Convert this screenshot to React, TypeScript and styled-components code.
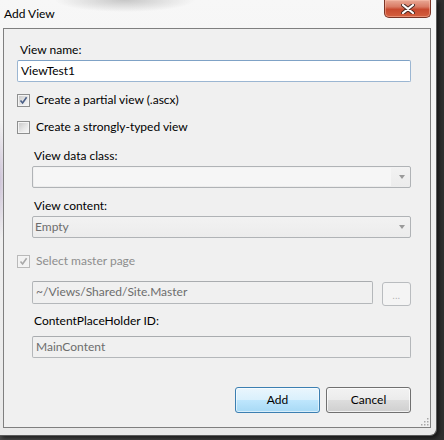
import React, { FC, ReactNode } from 'react';
import styled, { createGlobalStyle, css } from 'styled-components';

const GlobalStyle = createGlobalStyle`
  html, body {
    margin: 0;
    padding: 0;
  }
  body {
    background: #3a3a3a;
    font-family: Lato, 'Open Sans', 'Noto Sans', sans-serif;
    font-size: 12px;
  }
`;

const FIELD_FONT = css`
  font-family: Lato, 'Open Sans', 'Noto Sans', sans-serif;
  font-size: 12px;
  line-height: 16px;
`;

const App: FC = () => (
  <>
    <GlobalStyle />
    <Screen>
      <Window>
        <TitleBar>
          <Title>Add View</Title>
          <CloseButton>
            <svg width="14" height="10" viewBox="0 0 14 10">
              <path d="M2 1 L12 9 M12 1 L2 9" stroke="#4a2a24" strokeWidth="4" strokeLinecap="round" />
              <path d="M2 1 L12 9 M12 1 L2 9" stroke="#ffffff" strokeWidth="2.2" strokeLinecap="round" />
            </svg>
          </CloseButton>
        </TitleBar>
        <Client>
          <Label indent={3}>View name:</Label>
          <TextBox focused>ViewTest1</TextBox>

          <CheckRow top={10}>
            <CheckBox checked />
            <CheckText>Create a partial view (.ascx)</CheckText>
          </CheckRow>
          <CheckRow top={11}>
            <CheckBox />
            <CheckText>Create a strongly-typed view</CheckText>
          </CheckRow>

          <Indented>
            <Label indent={2} top={13}>View data class:</Label>
            <ComboBox>
              <ComboField />
              <Arrow />
            </ComboBox>

            <Label indent={2} top={10}>View content:</Label>
            <ComboBox>
              <ComboText>Empty</ComboText>
              <Arrow />
            </ComboBox>
          </Indented>

          <CheckRow top={15}>
            <CheckBox checked disabled />
            <CheckText disabled>Select master page</CheckText>
          </CheckRow>

          <Indented>
            <PathRow>
              <TextBox disabled grow>~/Views/Shared/Site.Master</TextBox>
              <BrowseButton>...</BrowseButton>
            </PathRow>
            <Label indent={2} top={7}>ContentPlaceHolder ID:</Label>
            <TextBox disabled gap={5}>MainContent</TextBox>
          </Indented>

          <ButtonBar>
            <Button primary>Add</Button>
            <Button>Cancel</Button>
          </ButtonBar>

          <Grip>
            <svg width="9" height="9" viewBox="0 0 9 9">
              {[[7, 1], [7, 4], [4, 4], [7, 7], [4, 7], [1, 7]].map(([x, y]) => (
                <rect key={`${x}-${y}`} x={x} y={y} width="1.5" height="1.5" fill="#a7a7a7" />
              ))}
            </svg>
          </Grip>
        </Client>
      </Window>
    </Screen>
  </>
);

const CheckBox: FC<{ checked?: boolean; disabled?: boolean }> = ({ checked, disabled }) => (
  <Box disabled={disabled}>
    <BoxInner disabled={disabled}>
      {checked && (
        <svg width="9" height="9" viewBox="0 0 9 9">
          <path
            d="M1.5 4.5 L3.6 7 L7.6 1.2"
            fill="none"
            stroke={disabled ? '#a8a8a8' : '#4a5f87'}
            strokeWidth="1.6"
          />
        </svg>
      )}
    </BoxInner>
  </Box>
);

const Label: FC<{ indent?: number; top?: number; children: ReactNode }> = ({ indent = 0, top = 0, children }) => (
  <LabelText indent={indent} top={top}>{children}</LabelText>
);

const Screen = styled.div`
  width: 444px;
  height: 440px;
  overflow: hidden;
  background: linear-gradient(90deg, #4a4a4a 0%, #2f2f2f 100%);
`;

const Window = styled.div`
  box-sizing: border-box;
  width: 437px;
  height: 436px;
  padding: 0 5px 7px 3px;
  display: flex;
  flex-direction: column;
  border-right: 1px solid #5a5a5a;
  border-bottom: 1px solid #5a5a5a;
  border-bottom-right-radius: 7px;
  background:
    radial-gradient(ellipse 70px 12px at 125px 0px, rgba(140, 140, 140, 0.45), rgba(140, 140, 140, 0)),
    radial-gradient(ellipse 8px 60px at 0px 180px, rgba(170, 150, 190, 0.5), rgba(170, 150, 190, 0)),
    linear-gradient(180deg, #f7f7f7 0%, #f0f0f0 50%, #e9e9e9 100%);
  box-shadow: 2px 2px 4px rgba(0, 0, 0, 0.6);
`;

const TitleBar = styled.div`
  height: 28px;
  display: flex;
  justify-content: space-between;
  align-items: flex-start;
`;

const Title = styled.div`
  padding: 6px 0 0 1px;
  color: #000;
  font-size: 12px;
  line-height: 16px;
`;

const CloseButton = styled.div`
  box-sizing: border-box;
  width: 47px;
  height: 18px;
  display: flex;
  align-items: center;
  justify-content: center;
  border: 1px solid #7a3426;
  border-top: none;
  border-radius: 0 0 5px 5px;
  background: linear-gradient(180deg, #e9a996 0%, #d97b64 40%, #c84a2f 55%, #d4603f 100%);
  box-shadow: inset 0 0 0 1px rgba(255, 200, 180, 0.45);
`;

const Client = styled.div`
  position: relative;
  flex: 1;
  display: flex;
  flex-direction: column;
  padding: 13px 19px 0 13px;
  border: 1px solid #7f7f7f;
  background: #f0f0f0;
`;

const LabelText = styled.div<{ indent: number; top: number }>`
  ${FIELD_FONT};
  color: #000;
  padding-left: ${(p) => p.indent}px;
  margin-top: ${(p) => p.top}px;
  margin-bottom: 2px;
`;

const TextBox = styled.div<{ focused?: boolean; disabled?: boolean; grow?: boolean; gap?: number }>`
  ${FIELD_FONT};
  box-sizing: border-box;
  height: 22px;
  padding: 2px 3px;
  margin-top: ${(p) => p.gap ?? 0}px;
  flex: ${(p) => (p.grow ? 1 : 'none')};
  color: ${(p) => (p.disabled ? '#6d6d6d' : '#000')};
  background: ${(p) => (p.disabled ? '#f0f0f0' : '#fff')};
  border: 1px solid ${(p) => (p.disabled ? '#b4b7ba' : '#9bb6d2')};
  border-top-color: ${(p) => (p.disabled ? '#a9acaf' : '#7fa2c6')};
  border-radius: 2px;
`;

const CheckRow = styled.div<{ top: number }>`
  display: flex;
  align-items: center;
  gap: 6px;
  margin-top: ${(p) => p.top}px;
  height: 16px;
`;

const Box = styled.div<{ disabled?: boolean }>`
  box-sizing: border-box;
  width: 13px;
  height: 13px;
  padding: 1px;
  border: 1px solid ${(p) => (p.disabled ? '#b9b9b9' : '#8e8f8f')};
  background: #f4f4f4;
`;

const BoxInner = styled.div<{ disabled?: boolean }>`
  width: 100%;
  height: 100%;
  display: flex;
  align-items: center;
  justify-content: center;
  overflow: visible;
  background: ${(p) => (p.disabled
    ? '#f2f2f2'
    : 'linear-gradient(135deg, #cbcbcb 0%, #e6e6e6 55%, #f6f6f6 100%)')};

  svg {
    flex: none;
  }
`;

const CheckText = styled.span<{ disabled?: boolean }>`
  ${FIELD_FONT};
  color: ${(p) => (p.disabled ? '#8d8d8d' : '#000')};
`;

const Indented = styled.div`
  display: flex;
  flex-direction: column;
  margin-left: 15px;
`;

const ComboBox = styled.div`
  box-sizing: border-box;
  height: 22px;
  display: flex;
  align-items: stretch;
  padding: 1px;
  border: 1px solid #b0b3b6;
  border-radius: 2px;
  background: linear-gradient(180deg, #f2f2f2 0%, #ececec 100%);
`;

const ComboField = styled.div`
  flex: 1;
  margin-right: 1px;
  background: #f6f6f6;
`;

const ComboText = styled.div`
  ${FIELD_FONT};
  flex: 1;
  padding: 1px 1px 0;
  color: #6d6d6d;
`;

const Arrow = styled.div`
  width: 17px;
  display: flex;
  align-items: center;
  justify-content: center;

  &::before {
    content: '';
    width: 0;
    height: 0;
    margin-left: 2px;
    border-left: 3.5px solid transparent;
    border-right: 3.5px solid transparent;
    border-top: 4px solid #9a9a9a;
  }
`;

const PathRow = styled.div`
  display: flex;
  align-items: flex-start;
  gap: 9px;
  margin-top: 12px;

  & > div:first-child {
    height: 23px;
  }
`;

const BrowseButton = styled.div`
  box-sizing: border-box;
  width: 29px;
  height: 24px;
  margin-top: 1px;
  display: flex;
  align-items: center;
  justify-content: center;
  padding-top: 2px;
  border: 1px solid #b9bcbf;
  border-radius: 3px;
  background: #f4f4f4;
  color: #b0b0b0;
  font-size: 9px;
  letter-spacing: 0.5px;
`;

const ButtonBar = styled.div`
  display: flex;
  justify-content: flex-end;
  gap: 6px;
  margin-top: 29px;
`;

const Button = styled.div<{ primary?: boolean }>`
  ${FIELD_FONT};
  box-sizing: border-box;
  width: 85px;
  height: 26px;
  display: flex;
  align-items: center;
  justify-content: center;
  color: #000;
  border-radius: 3px;
  border: 1px solid ${(p) => (p.primary ? '#3c7fb1' : '#707070')};
  background: ${(p) => (p.primary
    ? 'linear-gradient(180deg, #eaf6fd 0%, #d9f0fc 50%, #bee6fd 51%, #a7d9f5 100%)'
    : 'linear-gradient(180deg, #f2f2f2 0%, #ebebeb 50%, #dddddd 51%, #cfcfcf 100%)')};
  box-shadow: inset 0 0 0 1px ${(p) => (p.primary ? 'rgba(255, 255, 255, 0.55)' : 'rgba(255, 255, 255, 0.7)')};
`;

const Grip = styled.div`
  position: absolute;
  right: 1px;
  bottom: 1px;
  width: 9px;
  height: 9px;
  display: flex;
`;

export default App;
